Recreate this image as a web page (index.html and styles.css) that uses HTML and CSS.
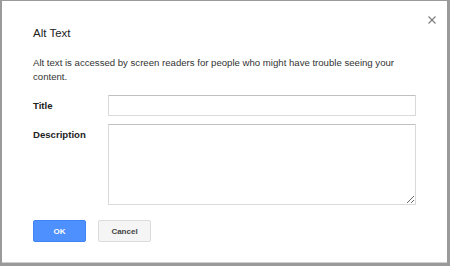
FILE: index.html
```html
<!DOCTYPE html>
<html>
<head>
<meta charset="utf-8">
<link rel="stylesheet" href="styles.css">
</head>
<body>
<div class="dialog">
  <button class="close" aria-label="Close">
    <svg width="8" height="8" viewBox="0 0 8 8"><path d="M0.5 0.5L7.5 7.5M7.5 0.5L0.5 7.5" stroke="#7a7a7a" stroke-width="1.1" fill="none"/></svg>
  </button>
  <h1 class="title">Alt Text</h1>
  <p class="desc">Alt text is accessed by screen readers for people who might have trouble seeing your content.</p>
  <div class="row">
    <label class="label">Title</label>
    <input class="field" type="text">
  </div>
  <div class="row">
    <label class="label">Description</label>
    <textarea class="field area"></textarea>
  </div>
  <div class="buttons">
    <button class="btn ok">OK</button>
    <button class="btn cancel">Cancel</button>
  </div>
</div>
</body>
</html>
```
FILE: styles.css
```css
html, body {
  margin: 0;
  padding: 0;
  background: #9a9a9a;
  width: 450px;
  height: 266px;
  overflow: hidden;
}
body {
  font-family: "Liberation Sans", Arial, sans-serif;
  padding: 1px 0 0 2px;
  box-sizing: border-box;
}
.dialog {
  position: relative;
  width: 445px;
  height: 261px;
  background: #fff;
  box-sizing: border-box;
  padding: 25px 31px 0 31px;
  box-shadow: 0 1px 0 #cfcfcf;
}
.close {
  position: absolute;
  top: 14px;
  right: 10px;
  width: 10px;
  height: 10px;
  padding: 1px;
  border: 0;
  background: none;
  display: flex;
  align-items: center;
  justify-content: center;
}
.title {
  margin: 0;
  font-size: 11.5px;
  line-height: 14px;
  font-weight: normal;
  color: #222;
}
.desc {
  margin: 16px 0 0 0;
  font-size: 9.6px;
  line-height: 14px;
  color: #333;
  width: 384px;
}
.row {
  display: flex;
  align-items: flex-start;
  margin-top: 11px;
}
.row + .row {
  margin-top: 8px;
}
.label {
  width: 75px;
  flex: none;
  font-size: 9.6px;
  font-weight: bold;
  color: #222;
  line-height: 13px;
  padding-top: 4px;
}
.field {
  margin: 0;
  width: 308px;
  height: 21px;
  box-sizing: border-box;
  border: 1px solid #d9d9d9;
  border-top-color: #c0c0c0;
  border-radius: 1px;
  background: #fff;
  padding: 0;
}
.area {
  width: 309px;
  height: 81px;
  resize: both;
}
.buttons {
  display: flex;
  gap: 12px;
  margin-top: 15px;
}
.btn {
  width: 53px;
  height: 22px;
  box-sizing: border-box;
  font-family: "Liberation Sans", Arial, sans-serif;
  font-size: 8px;
  font-weight: bold;
  border-radius: 2px;
  padding: 0;
}
.ok {
  background: #4d90fe;
  border: 1px solid #3f83f5;
  color: #fff;
}
.cancel {
  background: #f5f5f5;
  border: 1px solid #dcdcdc;
  color: #444;
}
```
